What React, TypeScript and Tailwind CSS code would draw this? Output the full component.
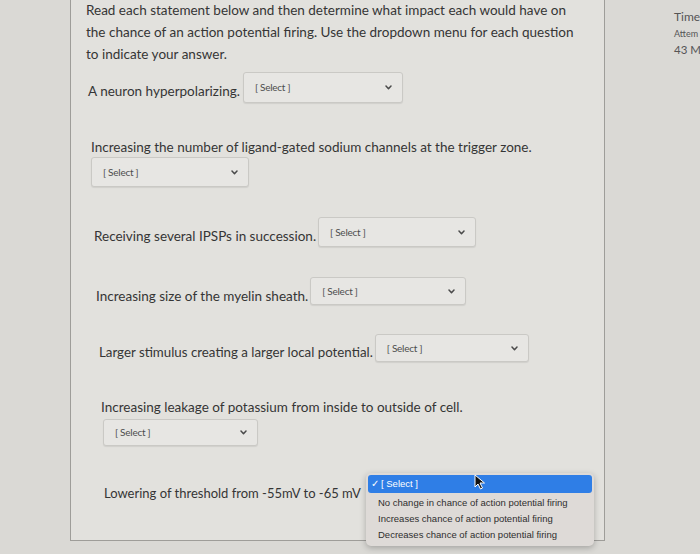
import React from "react";

type SelProps = { w: string; h: string };

function Chevron() {
  return (
    <svg width="7" height="5" viewBox="0 0 8 6" className="shrink-0">
      <path d="M1 1.2 L4 4.4 L7 1.2" fill="none" stroke="#4a4a4a" strokeWidth="1.8" strokeLinecap="round" strokeLinejoin="round" />
    </svg>
  );
}

function Select({ w, h }: SelProps) {
  return (
    <div
      className={`${w} ${h} shrink-0 flex items-center justify-between pl-[11px] pr-[10px] bg-[#e7e6e3] border border-[#cac9c5] rounded-[3px] shadow-[0_1px_1px_rgba(0,0,0,0.08)]`}
    >
      <span className="text-[10px] text-[#4d4d4d] tracking-tight">[ Select ]</span>
      <Chevron />
    </div>
  );
}

function Cursor() {
  return (
    <svg width="12" height="16" viewBox="0 0 12 16" className="absolute left-[474px] top-[474px]">
      <path d="M1 1 L1 13 L4 10 L6.5 15 L8.5 14 L6 9 L10.5 9 Z" fill="#111" stroke="#fff" strokeWidth="1" strokeLinejoin="round" />
    </svg>
  );
}

export default function App() {
  return (
    <div
      className="relative w-[700px] h-[554px] overflow-hidden flex bg-[#dad9d5] text-[#353535]"
      style={{ fontFamily: "Lato, 'Open Sans', sans-serif" }}
    >
      {/* left gutter */}
      <div className="w-[70px] shrink-0" />

      {/* question panel */}
      <div className="w-[535px] h-[541px] shrink-0 bg-[#e2e1dd] border-l border-r border-b border-[#9e9d99] text-[13.5px]">
        <p className="pl-[15px] -mt-[1px] leading-[22px] whitespace-nowrap">
          Read each statement below and then determine what impact each would have on
          <br />
          the chance of an action potential firing. Use the dropdown menu for each question
          <br />
          to indicate your answer.
        </p>

        <div className="flex items-center mt-[7px] pl-[17px] gap-[3px]">
          <span className="mt-[8px]">A neuron hyperpolarizing.</span>
          <Select w="w-[160px]" h="h-[31px]" />
        </div>

        <div className="mt-[34px] pl-[20px]">
          <div className="leading-[20px]">Increasing the number of ligand-gated sodium channels at the trigger zone.</div>
          <div className="mt-[0px]">
            <Select w="w-[158px]" h="h-[30px]" />
          </div>
        </div>

        <div className="flex items-center mt-[30px] pl-[23px] gap-[2px]">
          <span className="mt-[9px]">Receiving several IPSPs in succession.</span>
          <Select w="w-[158px]" h="h-[30px]" />
        </div>

        <div className="flex items-center mt-[29px] pl-[25px] gap-[2px]">
          <span className="mt-[10px]">Increasing size of the myelin sheath.</span>
          <Select w="w-[156px]" h="h-[28px]" />
        </div>

        <div className="flex items-center mt-[27px] pl-[28px] gap-[2px]">
          <span className="mt-[10px] text-[13.3px]">Larger stimulus creating a larger local potential.</span>
          <Select w="w-[154px]" h="h-[28px]" />
        </div>

        <div className="mt-[34px] pl-[30px]">
          <div className="leading-[20px]">Increasing leakage of potassium from inside to outside of cell.</div>
          <div className="mt-[2px] pl-[2px]">
            <Select w="w-[155px]" h="h-[27px]" />
          </div>
        </div>

        <div className="flex items-center mt-[37px] pl-[33px]">
          <span className="leading-[20px] text-[13px]">Lowering of threshold from -55mV to -65 mV</span>
        </div>
      </div>

      {/* right sidebar */}
      <div className="flex-1 pl-[69px] pt-[9px] text-[#555] whitespace-nowrap">
        <div className="text-[12px] leading-[16px]">Time</div>
        <div className="text-[9px] leading-[14px] mt-[2px]">Attem</div>
        <div className="text-[11.5px] leading-[16px] mt-[1px]">43 M</div>
      </div>

      {/* open dropdown menu */}
      <div
        className="absolute left-[366px] top-[473px] w-[228px] pt-[2px] pb-[3px] px-[2px] bg-[#dedad7] rounded-[5px] shadow-[0_2px_6px_rgba(0,0,0,0.25)] text-[9.5px] text-[#2e2e2e]"
        style={{ fontFamily: "'Liberation Sans', Arial, sans-serif" }}
      >
        <div className="h-[18px] flex items-center pl-[3px] bg-[#2f7ee6] text-white rounded-[3px]">
          <span className="mr-[2px]">✓</span>[ Select ]
        </div>
        <div className="h-[16px] flex items-center pl-[10px] mt-[2px]">No change in chance of action potential firing</div>
        <div className="h-[16px] flex items-center pl-[10px]">Increases chance of action potential firing</div>
        <div className="h-[16px] flex items-center pl-[10px]">Decreases chance of action potential firing</div>
      </div>

      <Cursor />
    </div>
  );
}
